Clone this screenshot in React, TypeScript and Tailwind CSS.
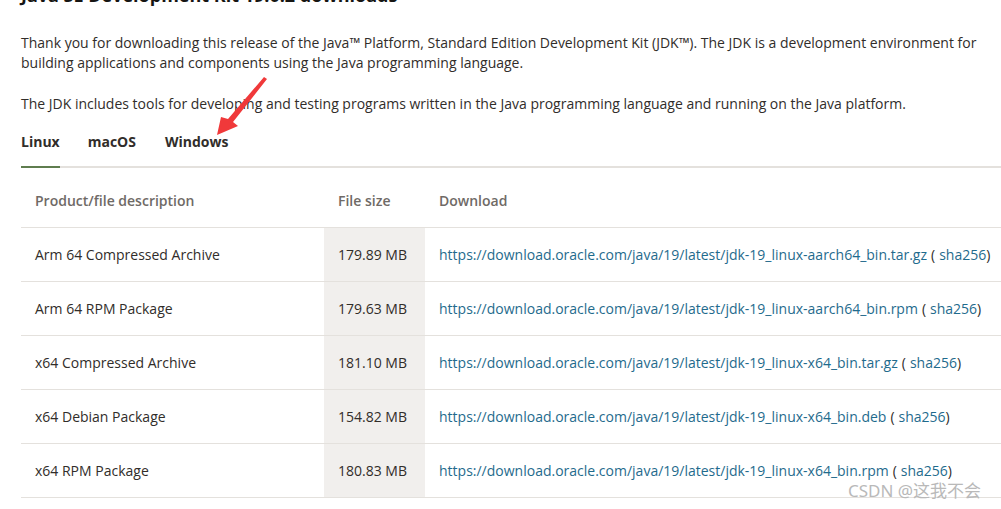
import React from "react";

const rows = [
  ["Arm 64 Compressed Archive", "179.89 MB", "https://download.oracle.com/java/19/latest/jdk-19_linux-aarch64_bin.tar.gz"],
  ["Arm 64 RPM Package", "179.63 MB", "https://download.oracle.com/java/19/latest/jdk-19_linux-aarch64_bin.rpm"],
  ["x64 Compressed Archive", "181.10 MB", "https://download.oracle.com/java/19/latest/jdk-19_linux-x64_bin.tar.gz"],
  ["x64 Debian Package", "154.82 MB", "https://download.oracle.com/java/19/latest/jdk-19_linux-x64_bin.deb"],
  ["x64 RPM Package", "180.83 MB", "https://download.oracle.com/java/19/latest/jdk-19_linux-x64_bin.rpm"],
];

export default function App() {
  return (
    <div
      className="relative w-[1001px] h-[509px] overflow-hidden bg-white text-[#312d2a]"
      style={{ fontFamily: '"Open Sans", "Noto Sans", sans-serif' }}
    >
      <div className="pl-[21px]">
        <h1 className="mt-[-16px] text-[18px] leading-[22px] font-bold text-[#161513] whitespace-nowrap">
          Java SE Development Kit 19.0.2 downloads
        </h1>
        <p className="mt-[27px] text-[14px] leading-[20px] pr-[10px]">
          Thank you for downloading this release of the Java™ Platform, Standard Edition Development Kit (JDK™). The JDK is a development environment for building applications and components using the Java programming language.
        </p>
        <p className="mt-[21px] text-[14px] leading-[20px]">
          The JDK includes tools for developing and testing programs written in the Java programming language and running on the Java platform.
        </p>
        <div className="mt-[18px] flex text-[14px] font-bold border-b-2 border-[#e4e1dd]">
          <div className="pb-[14px] border-b-2 border-[#5f7d4f] mb-[-2px] leading-[20px]">Linux</div>
          <div className="ml-[28px] pb-[14px] leading-[20px]">macOS</div>
          <div className="ml-[29px] pb-[14px] leading-[20px]">Windows</div>
        </div>
        <div className="text-[14px]">
          <div className="flex h-[60px] pt-[6px] items-center border-b border-[#e4e1dd] text-[#6f6a66] font-semibold">
            <div className="w-[303px] pl-[14px]">Product/file description</div>
            <div className="w-[101px] pl-[14px]">File size</div>
            <div className="pl-[14px]">Download</div>
          </div>
          {rows.map((r) => (
            <div key={r[0]} className="flex h-[54px] items-stretch border-b border-[#e4e1dd]">
              <div className="w-[303px] pl-[14px] flex items-center">{r[0]}</div>
              <div className="w-[101px] pl-[14px] flex items-center bg-[#f1efed]">{r[1]}</div>
              <div className="pl-[14px] flex items-center whitespace-nowrap">
                <span className="text-[#1f6b8d]">{r[2]}</span>
                <span className="ml-[4px]">(</span>
                <span className="ml-[4px] text-[#1f6b8d]">sha256</span>
                <span>)</span>
              </div>
            </div>
          ))}
        </div>
      </div>

      <svg className="absolute left-0 top-0" width="1001" height="509" viewBox="0 0 1001 509">
        <polygon points="264,77 267,79 233,122 238,126 217,135 221,117 228,119" fill="#f0393a" />
      </svg>

      <div
        className="absolute left-[848px] top-[480px] text-[17px] leading-[22px] text-[#b9b9b9]"
        style={{ fontFamily: '"Noto Sans", "Noto Sans CJK SC", sans-serif' }}
      >
        CSDN @这我不会
      </div>
    </div>
  );
}
